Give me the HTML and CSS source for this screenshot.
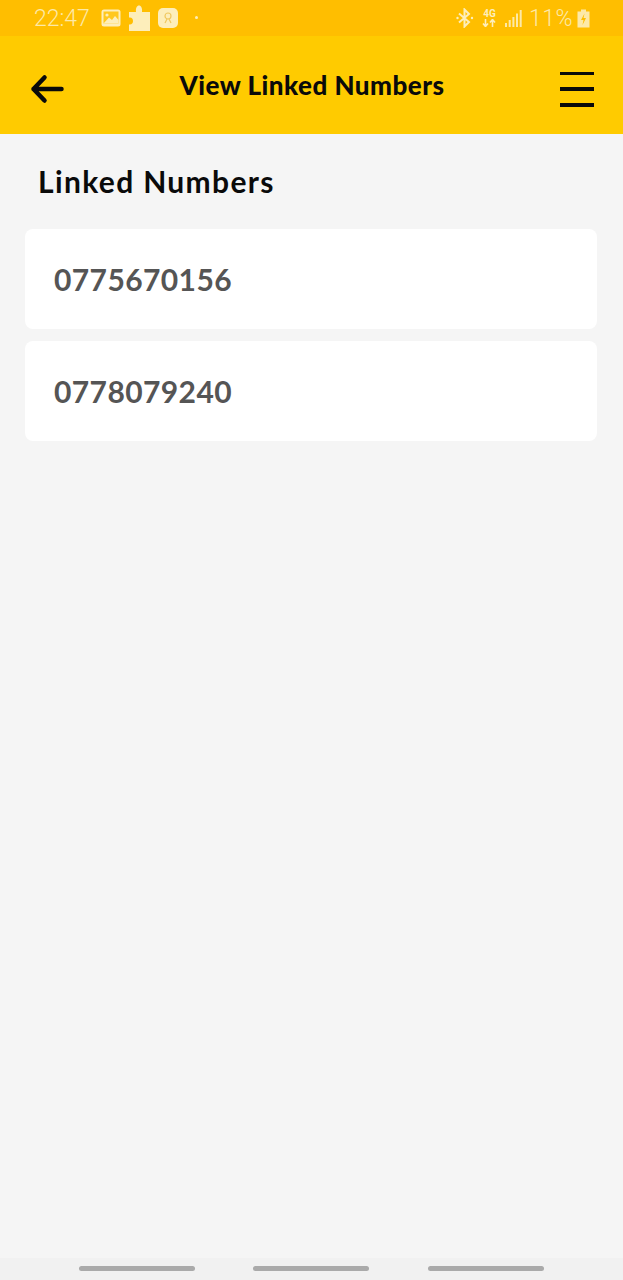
FILE: index.html
```html
<!DOCTYPE html>
<html lang="en">
<head>
    <meta charset="UTF-8">
    <meta name="viewport" content="width=device-width, initial-scale=1.0">
    <title>View Linked Numbers</title>
    <link rel="stylesheet" href="styles.css">
</head>
<body>
    <div class="page">
        <!-- Status bar -->
        <div class="status-bar">
            <div class="status-left">
                <span class="status-time">22:47</span>
                <svg class="icon-gallery" width="20" height="18" viewBox="0 0 20 18">
                    <rect x="0.5" y="0.5" width="19" height="17" rx="2.5" fill="#fdeebb"/>
                    <rect x="2.5" y="2.5" width="15" height="12" fill="#ffc81e"/>
                    <circle cx="6" cy="6" r="1.6" fill="#fdeebb"/>
                    <path d="M2.5 14.5 L8 8.5 L11 11 L14 7 L17.5 11 V14.5 Z" fill="#fdeebb"/>
                </svg>
                <svg class="icon-puzzle" width="22" height="26" viewBox="0 0 22 26">
                    <path d="M1 7 H8 C7.5 3 9 0.5 11 0.5 C13 0.5 14.5 3 14 7 H22 V26 H1 V19.5 C3.5 20 5 18.5 5 16 C5 13.5 3.5 12 1 12.5 Z" fill="#fdeebb"/>
                </svg>
                <svg class="icon-app" width="20" height="20" viewBox="0 0 20 20">
                    <rect width="20" height="20" rx="5" fill="#fdeebb"/>
                    <circle cx="10" cy="8" r="3" fill="none" stroke="#f0c860" stroke-width="1.2"/>
                    <path d="M7 15 L9 11 M13 15 L11 11" stroke="#f0c860" stroke-width="1.2"/>
                </svg>
                <span class="status-dot"></span>
            </div>
            <div class="status-right">
                <svg width="18" height="20" viewBox="0 0 18 20">
                    <path d="M3 5.5 L13 14 L8.5 18.5 V1.5 L13 6 L3 14.5" fill="none" stroke="#fdeebb" stroke-width="2"/>
                    <circle cx="16" cy="10" r="1.2" fill="#fdeebb"/>
                    <circle cx="1.5" cy="10" r="1.2" fill="#fdeebb"/>
                </svg>
                <div class="net-icon">
                    <span class="net-label">4G</span>
                    <svg width="14" height="8" viewBox="0 0 14 8">
                        <path d="M3.5 0 V7 M1 4.5 L3.5 7.5 L6 4.5 M10.5 8 V1 M8 3.5 L10.5 0.5 L13 3.5" fill="none" stroke="#fdeebb" stroke-width="1.6"/>
                    </svg>
                </div>
                <svg class="icon-signal" width="17" height="17" viewBox="0 0 17 17">
                    <rect x="0" y="13" width="2" height="4" fill="#fde9a8"/>
                    <rect x="3.7" y="10" width="2" height="7" fill="#fde9a8"/>
                    <rect x="7.4" y="7" width="2" height="10" fill="#fde9a8"/>
                    <rect x="11" y="3.5" width="2" height="13.5" fill="#fde9a8"/>
                    <rect x="14.7" y="0" width="2" height="17" fill="#fde9a8"/>
                </svg>
                <span class="status-battery-text">11%</span>
                <svg class="icon-battery" width="13" height="19" viewBox="0 0 13 19">
                    <path d="M4 0.5 H9 V2.5 H12.5 V18.5 H0.5 V2.5 H4 Z" fill="#fde9a8"/>
                    <path d="M7.5 4.5 L4 11 H6.5 L5.5 16 L9 9 H6.5 Z" fill="#ffbe00"/>
                </svg>
            </div>
        </div>

        <!-- Header -->
        <div class="app-header">
            <svg class="back-icon" width="34" height="30" viewBox="0 0 34 30">
                <path d="M31.5 15 H3.5 M14.5 3.5 L3.5 15 L14.5 26.5" fill="none" stroke="#0a0a0a" stroke-width="4.5" stroke-linecap="round" stroke-linejoin="round"/>
            </svg>
            <h1>View Linked Numbers</h1>
            <div class="menu-icon">
                <span></span>
                <span></span>
                <span></span>
            </div>
        </div>

        <!-- Linked numbers -->
        <div class="content">
            <h2>Linked Numbers</h2>
            <div class="number-card">0775670156</div>
            <div class="number-card">0778079240</div>
        </div>

        <!-- Nav pills -->
        <div class="bottom-nav">
            <span></span>
            <span></span>
            <span></span>
        </div>
    </div>
</body>
</html>
```

FILE: styles.css
```css
* {
    box-sizing: border-box;
}

body {
    margin: 0;
    font-family: "Lato", "Open Sans", sans-serif;
    background-color: #f5f5f5;
}

.page {
    height: 1280px;
    display: flex;
    flex-direction: column;
}

/* Status bar */
.status-bar {
    height: 36px;
    flex-shrink: 0;
    background-color: #ffbe00;
    display: flex;
    justify-content: space-between;
    align-items: center;
    padding: 0 33px 0 34px;
}

.status-left,
.status-right {
    display: flex;
    align-items: center;
}

.status-time {
    font-family: "Roboto", sans-serif;
    font-weight: 300;
    font-size: 23px;
    color: #fde9a8;
    margin-right: 11px;
}

.icon-puzzle {
    margin: 0 8px 0 7px;
}

.status-dot {
    width: 3px;
    height: 3px;
    border-radius: 50%;
    background-color: #fdeebb;
    margin-left: 17px;
    margin-bottom: 2px;
}

.status-right {
    gap: 6px;
}

.net-icon {
    display: flex;
    flex-direction: column;
    align-items: center;
    width: 15px;
    margin: 0 2px;
}

.net-label {
    font-family: "Roboto", sans-serif;
    font-weight: 700;
    font-size: 10px;
    line-height: 10px;
    color: #fdeebb;
}

.status-battery-text {
    font-family: "Roboto", sans-serif;
    font-weight: 300;
    font-size: 23px;
    letter-spacing: 0.5px;
    color: #fde9a8;
    margin-left: 1px;
}

.icon-battery {
    margin-left: -2px;
}

/* Header */
.app-header {
    height: 98px;
    flex-shrink: 0;
    background-color: #ffcb00;
    display: flex;
    justify-content: space-between;
    align-items: center;
    padding: 0 29px 0 30px;
}

.app-header h1 {
    margin: 0;
    font-size: 26px;
    font-weight: 900;
    letter-spacing: 0.5px;
    color: #0a0a0a;
}

.back-icon {
    margin-top: 8px;
}

.menu-icon {
    width: 34px;
    height: 35px;
    margin-top: 8px;
    display: flex;
    flex-direction: column;
    justify-content: space-between;
}

.menu-icon span {
    display: block;
    height: 3.5px;
    background-color: #0a0a0a;
}

/* Content */
.content {
    flex: 1;
    padding: 27px 26px 0 25px;
}

.content h2 {
    margin: 0 0 28px 13px;
    font-size: 30px;
    line-height: 40px;
    font-weight: 700;
    letter-spacing: 1.35px;
    color: #0a0a0a;
}

.number-card {
    height: 100px;
    margin-bottom: 12px;
    padding: 0 0 0 29px;
    display: flex;
    align-items: center;
    background-color: #ffffff;
    border-radius: 8px;
    font-size: 30px;
    font-weight: 700;
    letter-spacing: 0.4px;
    color: #555555;
}

/* Nav pills */
.bottom-nav {
    height: 22px;
    flex-shrink: 0;
    background-color: #f1f1f1;
    display: flex;
    justify-content: center;
    gap: 58.5px;
    padding: 8px 1px 0 0;
}

.bottom-nav span {
    width: 116px;
    height: 5px;
    border-radius: 3px;
    background-color: #aaaaaa;
}
```
